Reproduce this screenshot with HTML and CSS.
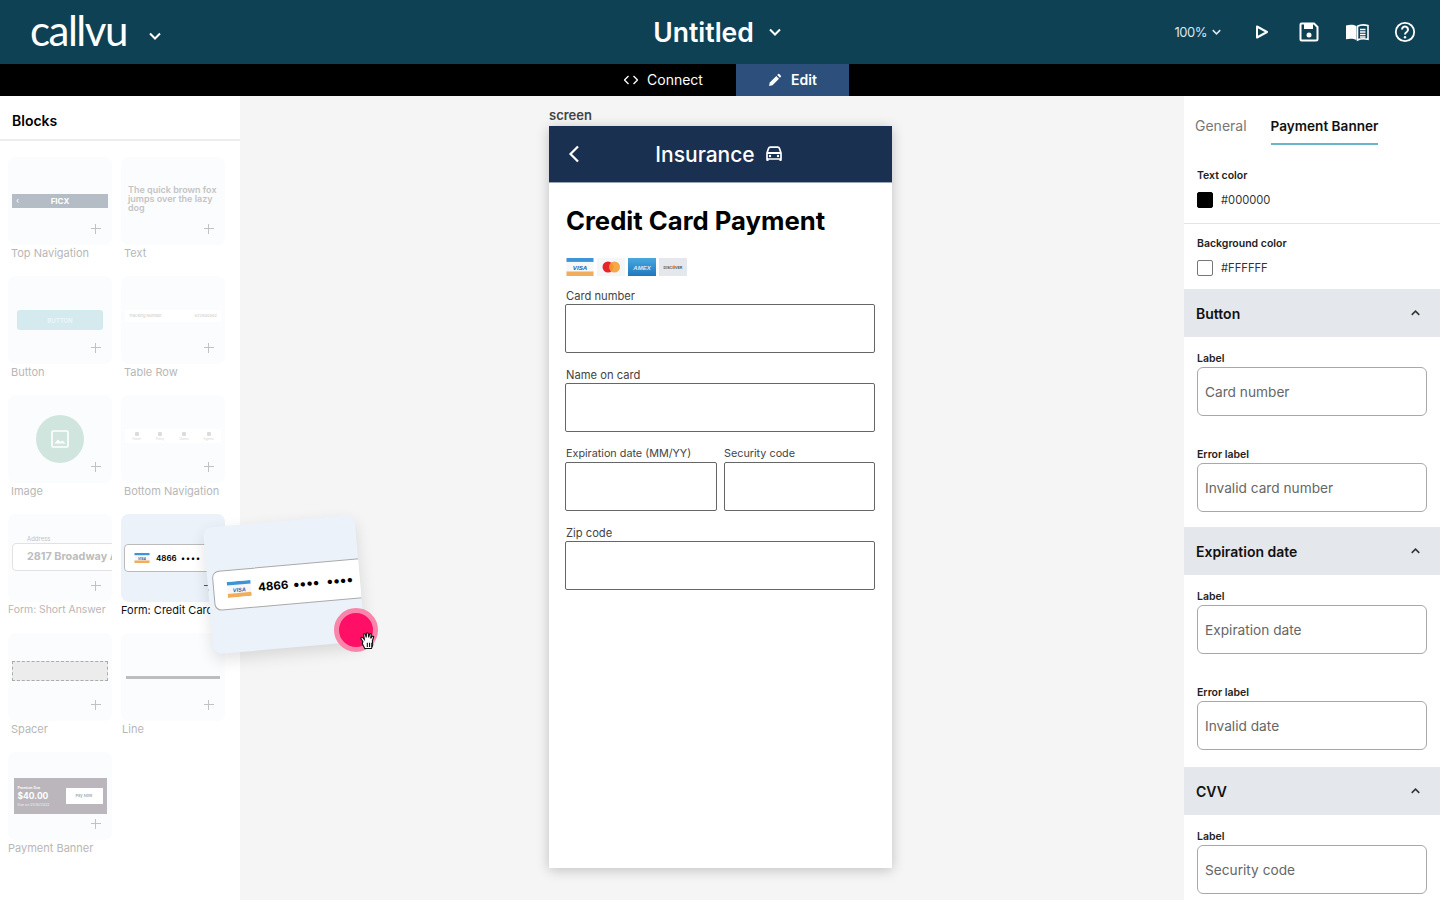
FILE: index.html
```html
<!DOCTYPE html>
<html lang="en">
<head>
  <meta charset="UTF-8" />
  <title>Callvu Editor</title>
  <link rel="stylesheet" href="styles.css">
</head>
<body>

  <header class="topbar">
    <div class="brand">
      <span class="logo">callvu</span>
      <svg class="chev" width="12" height="8" viewBox="0 0 12 8"><path d="M1 1.500l5 5 5-5"/></svg>
    </div>
    <div class="doc-title">
      <span>Untitled</span>
      <svg class="chev" width="12" height="8" viewBox="0 0 12 8"><path d="M1 1.500l5 5 5-5"/></svg>
    </div>
    <div class="tools">
      <span class="zoom-level">100%
        <svg class="chev chev-sm" width="9" height="6" viewBox="0 0 12 8"><path d="M1 1.500l5 5 5-5"/></svg>
      </span>
      <svg class="tool" width="24" height="24" viewBox="0 0 24 24"><path d="M8 6.500l10 5.500-10 5.500z" fill="none" stroke="#fff" stroke-width="2" stroke-linejoin="round"/></svg>
      <svg class="tool" width="24" height="24" viewBox="0 0 24 24"><path d="M4.500 3.500h12.500l3.500 3.500v12a1.500 1.500 0 0 1-1.500 1.500h-14.500a1 1 0 0 1-1-1v-15a1 1 0 0 1 1-1z" fill="none" stroke="#fff" stroke-width="2"/><path d="M7 4h9v5h-9z" fill="#fff"/><circle cx="12" cy="15" r="2.500" fill="#fff"/></svg>
      <svg class="tool" width="24" height="24" viewBox="0 0 24 24"><path d="M1 5.500c4-1 7.500-1 10.500.8v13.700c-3-1.500-6.500-1.600-10.500-.8z" fill="#fff"/><path d="M12.500 6.300c3-1.800 6.500-1.800 10.500-.8v13.700c-4-.8-7.500-.7-10.500.8z" fill="none" stroke="#fff" stroke-width="1.600"/><path d="M15 9.500h5.500M15 12h5.500M15 14.500h5.500M15 17h5.500" stroke="#fff" stroke-width="1.400"/></svg>
      <svg class="tool" width="24" height="24" viewBox="0 0 24 24"><circle cx="12" cy="12" r="9.200" fill="none" stroke="#fff" stroke-width="1.800"/><path d="M9 9.500a3 3 0 1 1 4.700 2.500c-1.100.7-1.700 1.300-1.700 2.500" fill="none" stroke="#fff" stroke-width="2"/><circle cx="12" cy="17.300" r="1.200" fill="#fff"/></svg>
    </div>
  </header>

  <nav class="modes">
    <a class="mode">
      <svg width="14" height="10" viewBox="0 0 14 10"><path d="M4.500 1l-4 4 4 4M9.500 1l4 4-4 4" fill="none" stroke="#fff" stroke-width="1.300"/></svg>
      Connect
    </a>
    <a class="mode mode-active">
      <svg width="14" height="14" viewBox="0 0 14 14"><path d="M1 13l.8-3.500 6.500-6.500 2.700 2.700-6.500 6.500z" fill="#fff"/><path d="M9.200 2.100l1-1a.8.8 0 0 1 1.100 0l1.600 1.600a.8.8 0 0 1 0 1.100l-1 1z" fill="#fff"/></svg>
      Edit
    </a>
  </nav>

  <main class="workspace">

    <aside class="blocks">
      <h2 class="blocks-title">Blocks</h2>
      <div class="blocks-grid">

        <div class="block">
          <div class="block-card">
            <div class="th-nav"><span class="th-nav-back">‹</span><span>FICX</span></div>
            <span class="plus"></span>
          </div>
          <div class="block-name name-in">Top Navigation</div>
        </div>

        <div class="block">
          <div class="block-card">
            <div class="th-text">The quick brown fox jumps over the lazy dog</div>
            <span class="plus"></span>
          </div>
          <div class="block-name name-in">Text</div>
        </div>

        <div class="block">
          <div class="block-card">
            <div class="th-button">BUTTON</div>
            <span class="plus"></span>
          </div>
          <div class="block-name name-in">Button</div>
        </div>

        <div class="block">
          <div class="block-card">
            <div class="th-row"><span>Tracking Number</span><span>6Z2900002</span></div>
            <span class="plus"></span>
          </div>
          <div class="block-name name-in">Table Row</div>
        </div>

        <div class="block">
          <div class="block-card">
            <div class="th-image">
              <svg width="18" height="18" viewBox="0 0 18 18"><rect x="1" y="1" width="16" height="16" rx="1" fill="none" stroke="#fff" stroke-width="1.600"/><path d="M3.500 13.500l3.500-4 2.500 2.500 2-1.500 3 3z" fill="#fff"/></svg>
            </div>
            <span class="plus"></span>
          </div>
          <div class="block-name name-in">Image</div>
        </div>

        <div class="block">
          <div class="block-card card-raised">
            <div class="th-bottomnav"><span>Home</span><span>Policy</span><span>Claims</span><span>Agents</span></div>
            <span class="plus"></span>
          </div>
          <div class="block-name name-in">Bottom Navigation</div>
        </div>

        <div class="block">
          <div class="block-card card-clip">
            <div class="th-field">
              <div class="th-field-label">Address</div>
              <div class="th-field-box">2817 Broadway Ave</div>
            </div>
            <span class="plus"></span>
          </div>
          <div class="block-name name-tight">Form: Short Answer</div>
        </div>

        <div class="block block-on">
          <div class="block-card card-clip">
            <div class="th-credit">
              <svg class="visa" width="16" height="10" viewBox="0 0 24 16"><use href="#visa-card"/></svg>
              <b>4866</b><i>••••</i>
            </div>
            <span class="plus"></span>
          </div>
          <div class="block-name">Form: Credit Card</div>
        </div>

        <div class="block">
          <div class="block-card card-high">
            <div class="th-spacer"></div>
            <span class="plus"></span>
          </div>
          <div class="block-name name-in">Spacer</div>
        </div>

        <div class="block">
          <div class="block-card">
            <div class="th-line"></div>
            <span class="plus"></span>
          </div>
          <div class="block-name name-line">Line</div>
        </div>

        <div class="block">
          <div class="block-card">
            <div class="th-banner">
              <div>
                <div class="th-banner-small">Premium Due</div>
                <div class="th-banner-amount">$40.00</div>
                <div class="th-banner-small th-banner-date">Due on 01/30/2022</div>
              </div>
              <div class="th-banner-btn">Pay Now</div>
            </div>
            <span class="plus"></span>
          </div>
          <div class="block-name">Payment Banner</div>
        </div>

      </div>
    </aside>

    <section class="canvas">
      <div class="screen-label">screen</div>
      <div class="phone">
        <div class="phone-head">
          <svg class="phone-back" width="12" height="18" viewBox="0 0 12 18"><path d="M10 1.500l-7.500 7.500 7.500 7.500" fill="none" stroke="#fff" stroke-width="2.200"/></svg>
          <span class="phone-title">Insurance</span>
          <svg width="18" height="16" viewBox="0 0 18 16"><path d="M2 7l1.500-4.500a2 2 0 0 1 1.800-1.300h7.400a2 2 0 0 1 1.800 1.300l1.500 4.500v6h-14z" fill="none" stroke="#fff" stroke-width="1.700" stroke-linejoin="round"/><path d="M2 7h14M2.500 13v2M15.500 13v2" stroke="#fff" stroke-width="2"/><circle cx="5" cy="10" r="1.200" fill="#fff"/><circle cx="13" cy="10" r="1.200" fill="#fff"/></svg>
        </div>
        <div class="phone-body">
          <h1 class="pay-title">Credit Card Payment</h1>
          <div class="pay-cards">
            <svg width="28" height="18" viewBox="0 0 24 16"><defs><g id="visa-card"><rect width="24" height="16" fill="#f7f7f7"/><rect width="24" height="3.500" fill="#3d95d8"/><rect y="12" width="24" height="4" fill="#f2ad5c"/><text x="12" y="10.700" text-anchor="middle" class="visa-text">VISA</text></g></defs><use href="#visa-card"/></svg>
            <svg width="28" height="18" viewBox="0 0 28 18"><rect width="28" height="18" fill="#f5f6f8"/><circle cx="11" cy="9" r="5.500" fill="#e4262b"/><circle cx="17.500" cy="9" r="5.500" fill="#f5a033" opacity=".9"/></svg>
            <svg width="28" height="18" viewBox="0 0 28 18"><defs><linearGradient id="amex" x1="0" y1="0" x2="0" y2="1"><stop offset="0" stop-color="#4aa8e0"/><stop offset="1" stop-color="#1f78bd"/></linearGradient></defs><rect width="28" height="18" fill="url(#amex)"/><text x="14" y="11.500" text-anchor="middle" class="amex-text">AMEX</text></svg>
            <svg width="28" height="18" viewBox="0 0 28 18"><rect width="28" height="18" fill="#e4e8ec"/><text x="14" y="10.500" text-anchor="middle" class="disc-text">DISCOVER</text><circle cx="15" cy="8.700" r="1.300" fill="#ef8a2b"/></svg>
          </div>
          <label class="pay-field">
            <span>Card number</span>
            <div class="pay-input"></div>
          </label>
          <label class="pay-field">
            <span>Name on card</span>
            <div class="pay-input"></div>
          </label>
          <div class="pay-split">
            <label class="pay-field">
              <span>Expiration date (MM/YY)</span>
              <div class="pay-input"></div>
            </label>
            <label class="pay-field">
              <span>Security code</span>
              <div class="pay-input"></div>
            </label>
          </div>
          <label class="pay-field">
            <span>Zip code</span>
            <div class="pay-input"></div>
          </label>
        </div>
      </div>
    </section>

    <aside class="props">
      <div class="props-tabs">
        <span class="props-tab">General</span>
        <span class="props-tab props-tab-on">Payment Banner</span>
      </div>

      <div class="color-group">
        <div class="prop-label">Text color</div>
        <div class="color-row"><span class="swatch swatch-black"></span>#000000</div>
      </div>
      <div class="color-group color-group-last">
        <div class="prop-label">Background color</div>
        <div class="color-row"><span class="swatch"></span>#FFFFFF</div>
      </div>

      <div class="band">Button <svg class="chev-up" width="9" height="6" viewBox="0 0 12 8"><path d="M1 6.500l5-5 5 5"/></svg></div>
      <div class="band-body">
        <div class="prop-label">Label</div>
        <div class="prop-input">Card number</div>
        <div class="prop-label">Error label</div>
        <div class="prop-input">Invalid card number</div>
      </div>

      <div class="band">Expiration date <svg class="chev-up" width="9" height="6" viewBox="0 0 12 8"><path d="M1 6.500l5-5 5 5"/></svg></div>
      <div class="band-body band-body-wide">
        <div class="prop-label">Label</div>
        <div class="prop-input">Expiration date</div>
        <div class="prop-label">Error label</div>
        <div class="prop-input">Invalid date</div>
      </div>

      <div class="band">CVV <svg class="chev-up" width="9" height="6" viewBox="0 0 12 8"><path d="M1 6.500l5-5 5 5"/></svg></div>
      <div class="band-body">
        <div class="prop-label">Label</div>
        <div class="prop-input">Security code</div>
      </div>
    </aside>

  </main>

  <div class="drag-card">
    <div class="drag-field">
      <svg width="24" height="16" viewBox="0 0 24 16"><use href="#visa-card"/></svg>
      <b>4866</b><i>••••</i><i class="drag-dots">••••</i>
    </div>
  </div>
  <div class="drag-dot">
    <svg class="drag-hand" width="20" height="20" viewBox="0 0 18 18"><path d="M3.500 9.500c-1-1.500-2.500-3-1.500-3.700s2 .7 2.800 1.700l-.6-4c-.2-1.200 1.300-1.500 1.600-.3l.7 2.600.2-3.300c.1-1.200 1.600-1.200 1.700 0l.3 3.200.8-2.700c.3-1.100 1.700-.8 1.500.4l-.5 3.300 1.200-1.700c.7-.9 1.900-.2 1.400.8l-1.100 3c.8 2.500.3 5-.8 7h-6c-.8-1.500-1.500-3-2.200-4.300z" fill="#fff" stroke="#111" stroke-width="1"/><path d="M7.500 10.500v4M9.500 10.500v4M11.500 10.500v4" stroke="#111" stroke-width="1"/></svg>
  </div>

</body>
</html>
```

FILE: styles.css
```css
* { box-sizing: border-box; }
body {
  margin: 0; height: 100vh; overflow: hidden;
  background: #f5f5f5; color: #000;
  font-family: 'Inter', 'Liberation Sans', sans-serif;
  display: flex; flex-direction: column;
  position: relative;
}

/* top bar */
.topbar {
  height: 64px; background: #0f4155; color: #fff;
  display: grid; grid-template-columns: 1fr auto 1fr;
  align-items: center; flex: none;
}
.chev path, .chev-up path {
  fill: none; stroke: currentColor; stroke-width: 2;
}
.brand { display: flex; align-items: center; padding-left: 30px; }
.logo {
  font-family: 'Lato', sans-serif; font-size: 42px; font-weight: 400;
  line-height: 60px; height: 64px; width: 119px; letter-spacing: -1.5px;
}
.brand .chev { margin-top: 8px; }
.doc-title {
  display: flex; align-items: center; gap: 15px;
  font-size: 26.500px; font-weight: 600; margin-right: 6px;
}
.tools {
  display: flex; align-items: center; justify-content: flex-end;
  padding-right: 23px; gap: 24px;
}
.zoom-level {
  font-size: 13px; color: #dbe6ea; margin-right: 4px;
  display: flex; align-items: center; gap: 5px; letter-spacing: -.5px;
}

.modes {
  height: 32px; background: #000; flex: none;
  display: flex; gap: 16px; padding-left: 607px;
}
.mode {
  width: 113px; display: flex; align-items: center; justify-content: center;
  gap: 9px; color: #fff; font-size: 14px; padding-bottom: 1px;
}
.mode-active { background: #2d4f7c; font-weight: 600; }

.workspace { flex: 1; display: flex; min-height: 0; }

/* left blocks list */
.blocks { width: 240px; background: #fff; flex: none; }
.blocks-title {
  margin: 0; height: 45px; padding: 6px 12px 0;
  display: flex; align-items: center;
  font-size: 14px; font-weight: 600;
  border-bottom: 2px solid #eee;
}
.blocks-grid {
  display: grid; grid-template-columns: 104px 104px;
  column-gap: 9px; grid-auto-rows: 119px;
  padding: 16px 8px;
}
.block-card {
  height: 88px; border-radius: 8px; background: #fbfcfe;
  position: relative; padding: 0 4px;
  display: flex; align-items: center; justify-content: center;
}
.card-clip { overflow: hidden; justify-content: flex-start; }
.card-raised { padding-bottom: 6px; }
.card-high { padding-bottom: 12px; }
.block-on .block-card { background: #ebf2fa; }
.block-name { font-size: 11px; line-height: 16px; color: #b7b7b7; white-space: nowrap; overflow: hidden; }
.name-in { padding-left: 3px; }
.name-line { padding-left: 1px; }
.name-tight { font-size: 10.400px; }
.block-on .block-name { color: #111; }
.plus { position: absolute; right: 11px; bottom: 11px; width: 10px; height: 10px; }
.plus::before, .plus::after { content: ''; position: absolute; background: #c2c2c2; }
.plus::before { left: 0; right: 0; top: 4px; height: 1px; }
.plus::after { top: 0; bottom: 0; left: 4px; width: 1px; }
.block-on .plus::before, .block-on .plus::after { background: #555; }

.th-nav {
  width: 96px; height: 14px; background: #b4bcc6; color: #fff;
  font-size: 8px; font-weight: 700; text-align: center; line-height: 14px;
  position: relative;
}
.th-nav-back { position: absolute; left: 4px; top: -1px; font-weight: 400; }
.th-text { width: 90px; font-size: 9px; line-height: 9px; font-weight: 600; color: #c4c4c4; margin-bottom: 5px; }
.th-button {
  width: 86px; height: 20px; border-radius: 3px; background: #d4eaee;
  color: #eef7f9; font-size: 6px; font-weight: 600;
  display: flex; align-items: center; justify-content: center;
}
.th-row {
  width: 96px; height: 12px; background: #fff; color: #c8c8c8; font-size: 4px;
  display: flex; justify-content: space-between; align-items: center; padding: 0 4px;
  margin-bottom: 9px;
}
.th-image {
  width: 48px; height: 48px; border-radius: 50%; background: #d0e5dd;
  display: flex; align-items: center; justify-content: center;
}
.th-bottomnav {
  width: 96px; height: 14px; background: #fff; color: #d4d4d4; font-size: 3px;
  display: flex; justify-content: space-around; align-items: flex-end; padding-bottom: 2px;
}
.th-bottomnav span { display: flex; flex-direction: column; align-items: center; gap: 1px; }
.th-bottomnav span::before { content: ''; width: 4px; height: 4px; background: #dcdcdc; border-radius: 1px; }
.th-field { width: 200px; flex: none; margin-bottom: 11px; }
.th-field-label { font-size: 6px; color: #c2c2c2; padding-left: 15px; margin-bottom: 1px; }
.th-field-box {
  height: 28px; border: 1px solid #e2e2e2; border-radius: 4px; background: #fff;
  font-size: 10.800px; font-weight: 700; color: #bdbdbd; line-height: 26px; padding-left: 14px;
}
.th-credit {
  width: 120px; height: 28px; margin-left: -1px; flex: none;
  border: 1px solid #bbb; border-radius: 4px; background: #fff;
  display: flex; align-items: center; padding-left: 9px; font-size: 8px;
}
.th-credit b { margin-left: 6px; font-weight: 600; }
.th-credit i { margin-left: 4px; font-style: normal; letter-spacing: .5px; }
.th-spacer { width: 96px; height: 20px; background: #ececec; border: 1px dashed #ababab; }
.th-line { width: 94px; height: 3px; background: #bdbdbd; }
.th-banner {
  width: 93px; height: 36px; background: #bbb6bc; color: #fff;
  display: flex; justify-content: space-between; align-items: center;
  padding: 0 4px;
}
.th-banner-small { font-size: 3.500px; font-weight: 600; }
.th-banner-date { font-weight: 400; opacity: .8; }
.th-banner-amount { font-size: 8.500px; font-weight: 700; line-height: 13px; }
.th-banner-btn {
  width: 37px; height: 16px; background: #fff; color: #aaa;
  font-size: 4px; font-weight: 600; text-align: center; line-height: 16px;
}

/* middle canvas */
.canvas { flex: 1; padding-left: 309px; padding-top: 10px; }
.screen-label { font-size: 13px; font-weight: 600; color: #444; line-height: 18px; margin-bottom: 2px; }
.phone { width: 343px; height: 742px; background: #fff; box-shadow: 0 2px 12px rgba(0,0,0,0.22); }
.phone-head {
  height: 57px; background: #1a3050; color: #fff; position: relative;
  border-bottom: 1px solid #9aa4b2;
  display: flex; align-items: center; justify-content: center; gap: 10px;
  padding-right: 3px;
}
.phone-back { position: absolute; left: 19px; top: 19px; }
.phone-title { font-size: 21px; font-weight: 500; }
.phone-body { padding: 22px 17px 0; }
.pay-title { margin: 0; font-size: 25.700px; line-height: 32px; font-weight: 700; }
.pay-cards { display: flex; gap: 3px; margin-top: 21px; margin-bottom: 13px; height: 18px; }
.visa-text { font: italic 700 5.500px 'Liberation Sans', sans-serif; fill: #1a5fa8; }
.amex-text { font: italic 700 6px 'Liberation Sans', sans-serif; fill: #d3ebfa; }
.disc-text { font: 700 3.600px 'Liberation Sans', sans-serif; fill: #555; }
.pay-field { display: block; margin-bottom: 15px; }
.pay-field span { display: block; font-size: 11.200px; line-height: 14px; color: #444; margin-bottom: 1px; white-space: nowrap; }
.pay-input { height: 49px; margin-left: -1px; border: 1px solid #666; border-radius: 2px; }
.pay-split { display: grid; grid-template-columns: 151px 151px; column-gap: 7px; }
.pay-split .pay-field span { font-size: 10.800px; }
.pay-split .pay-field:last-child .pay-input { margin-left: 0; }

/* right properties */
.props { width: 256px; background: #fff; flex: none; overflow: hidden; }
.props-tabs { display: flex; gap: 24px; padding-left: 11px; height: 49px; }
.props-tab { font-size: 14px; color: #777; padding-top: 21px; line-height: 18px; }
.props-tab-on { color: #111; font-weight: 600; border-bottom: 2px solid #6bb5c9; font-size: 13.600px; }
.color-group { height: 79px; padding: 23px 13px 0; border-bottom: 1px solid #e4e4e4; }
.color-group-last { height: 65px; padding-top: 12px; border-bottom: 0; }
.prop-label { font-size: 10.500px; line-height: 12px; padding-top: 2px; font-weight: 600; color: #222; }
.color-row { display: flex; align-items: center; gap: 8px; margin-top: 10px; font-size: 11.200px; color: #333; }
.swatch { width: 16px; height: 16px; border: 1px solid #777; border-radius: 2px; }
.swatch-black { background: #000; border-color: #000; }
.band {
  height: 48px; background: #e4e7eb; padding: 0 20px 0 12px;
  display: flex; align-items: center; justify-content: space-between;
  font-size: 14px; font-weight: 600; color: #111;
}
.chev-up { color: #333; }
.band-body { padding: 14px 13px 15px; }
.band-body-wide { padding-bottom: 17px; }
.prop-input {
  height: 49px; margin: 2px 0 31px; padding-left: 7px;
  border: 1px solid #a8a8a8; border-radius: 6px;
  display: flex; align-items: center;
  font-size: 13.700px; color: #666;
}
.band-body .prop-input:last-child { margin-bottom: 0; }

/* block being dragged */
.drag-card {
  position: absolute; left: 208px; top: 521px;
  width: 152px; height: 127px; border-radius: 8px;
  background: #ebf2fa; transform: rotate(-5deg);
  box-shadow: 0 6px 16px rgba(0,0,0,0.12);
  display: flex; align-items: center; overflow: hidden;
}
.drag-field {
  flex: none; width: 180px; height: 40px; margin-left: 5px;
  background: #fff; border: 1px solid #a9a9a9; border-radius: 7px;
  display: flex; align-items: center; padding-left: 13px; font-size: 11.500px;
}
.drag-field b { margin-left: 7px; font-weight: 700; }
.drag-field i { font-style: normal; margin-left: 4px; letter-spacing: -1.200px; font-size: 14px; }
.drag-field .drag-dots { margin-left: 7px; }
.drag-dot {
  position: absolute; left: 334px; top: 608px;
  width: 44px; height: 44px; border-radius: 50%;
  background: #ff0f66; border: 5px solid #f985ab;
}
.drag-hand { position: absolute; left: 20px; top: 18px; }
```
